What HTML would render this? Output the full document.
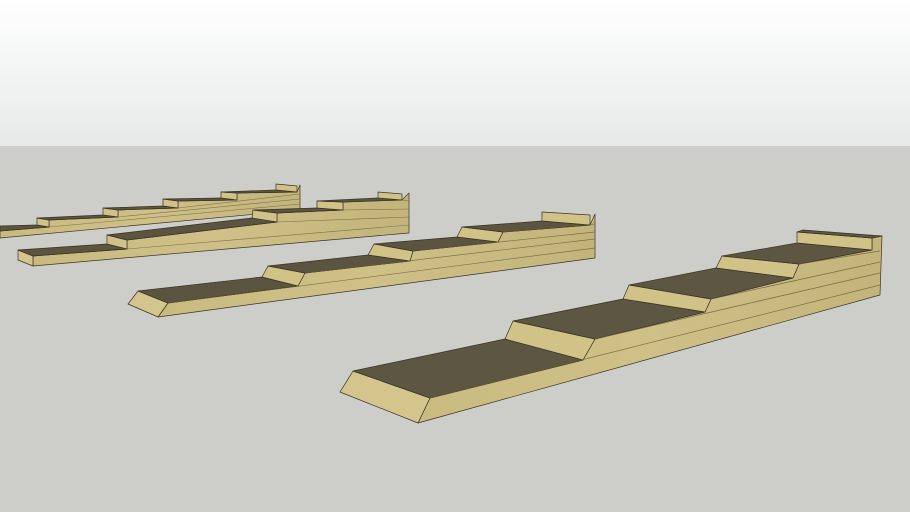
<!DOCTYPE html>
<html><head><style>html,body{margin:0;padding:0;overflow:hidden}svg{display:block}</style></head>
<body>
<svg width="910" height="512" viewBox="0 0 910 512" xmlns="http://www.w3.org/2000/svg">
<defs>
<linearGradient id="sky" x1="0" y1="0" x2="0" y2="1"><stop offset="0" stop-color="#ffffff"/><stop offset="1" stop-color="#e7e9e9"/></linearGradient>
<linearGradient id="side" x1="0" y1="0" x2="1" y2="0"><stop offset="0" stop-color="#c9bb80"/><stop offset="0.5" stop-color="#cfc088"/><stop offset="1" stop-color="#c2b47a"/></linearGradient>
</defs>
<rect x="0" y="0" width="910" height="146" fill="url(#sky)"/>
<rect x="0" y="146" width="910" height="366" fill="#cdcdca"/>
<g stroke="#3a3424" stroke-width="0.7" stroke-linejoin="round">
<polygon fill="url(#side)" points="0,231 49,227 49,220 118,217 118,210 178,208 178,201 237,200 237,193 297,192 300,185 300,210 0,238"/>
<polygon fill="#5a5440" points="0,226 37,225 49,227 0,231"/>
<polygon fill="#d1c288" points="37,218 49,220 49,227 37,225"/>
<polygon fill="#5a5440" points="37,218 103,215 118,217 49,220"/>
<polygon fill="#d1c288" points="103,208 118,210 118,217 103,215"/>
<polygon fill="#5a5440" points="103,208 163,206 178,208 118,210"/>
<polygon fill="#d1c288" points="163,199 178,201 178,208 163,206"/>
<polygon fill="#5a5440" points="163,199 221,198 237,200 178,201"/>
<polygon fill="#d1c288" points="221,192 237,193 237,200 221,198"/>
<polygon fill="#5a5440" points="221,192 276,190 297,192 237,193"/>
<polygon fill="#d1c288" points="276,184 297,186 297,192 276,190"/>
<g stroke="#6a5e3a" stroke-width="0.6" opacity="0.8"><line x1="49" y1="227" x2="300" y2="204"/><line x1="118" y1="217" x2="300" y2="199"/><line x1="178" y1="208" x2="300" y2="194"/></g>
<polygon fill="url(#side)" points="33,256 127,249 127,240 277,222 277,213 343,210 343,202 402,200 409,193 409,233 33,266"/>
<polygon fill="#d4c58c" points="18,250 33,256 33,266 18,260"/>
<polygon fill="#5a5440" points="18,250 107,244 127,249 33,256"/>
<polygon fill="#d1c288" points="107,235 127,240 127,249 107,244"/>
<polygon fill="#5a5440" points="107,235 252,218 277,222 127,240"/>
<polygon fill="#d1c288" points="253,210 277,213 277,222 252,218"/>
<polygon fill="#5a5440" points="253,210 317,208 343,210 277,213"/>
<polygon fill="#d1c288" points="317,201 343,202 343,210 317,208"/>
<polygon fill="#5a5440" points="317,201 378,198 402,200 343,202"/>
<polygon fill="#d1c288" points="378,192 402,194 402,200 378,198"/>
<g stroke="#6a5e3a" stroke-width="0.6" opacity="0.8"><line x1="127" y1="249" x2="409" y2="225"/><line x1="277" y1="222" x2="409" y2="217"/><line x1="343" y1="210" x2="409" y2="209"/><line x1="402" y1="200" x2="409" y2="201"/></g>
<polygon fill="url(#side)" points="168,303 298,286 305,273 410,261 413,251 498,242 503,232 590,225 595,214 595,258 158,317"/>
<polygon fill="#d4c58c" points="138,291 168,303 158,317 128,304"/>
<polygon fill="#5a5440" points="138,291 262,277 298,286 168,303"/>
<polygon fill="#d1c288" points="268,266 305,273 298,286 262,277"/>
<polygon fill="#5a5440" points="268,266 368,255 410,261 305,273"/>
<polygon fill="#d1c288" points="374,244 413,251 410,261 368,255"/>
<polygon fill="#5a5440" points="374,244 457,237 498,242 413,251"/>
<polygon fill="#d1c288" points="462,227 503,232 498,242 457,237"/>
<polygon fill="#5a5440" points="462,227 542,221 590,225 503,232"/>
<polygon fill="#d1c288" points="542,212 590,215 590,225 542,221"/>
<g stroke="#6a5e3a" stroke-width="0.7" opacity="0.8"><line x1="168" y1="303" x2="595" y2="248"/><line x1="305" y1="273" x2="595" y2="239"/><line x1="413" y1="251" x2="595" y2="232"/><line x1="503" y1="232" x2="595" y2="224"/></g>
<polygon fill="url(#side)" points="430,398 583,360 595,339 705,312 711,299 793,278 799,264 872,250 872,238 882,236 880,295 418,423"/>
<polygon fill="#d4c58c" points="353,371 430,398 418,423 340,392"/>
<polygon fill="#5c5642" points="353,371 505,339 583,360 430,398"/>
<polygon fill="#d1c288" points="513,321 595,339 583,360 505,339"/>
<polygon fill="#5c5642" points="513,321 623,299 705,312 595,339"/>
<polygon fill="#d1c288" points="629,285 711,299 705,312 623,299"/>
<polygon fill="#5c5642" points="629,285 716,268 793,278 711,299"/>
<polygon fill="#d1c288" points="722,256 799,264 793,278 716,268"/>
<polygon fill="#5c5642" points="722,256 797,243 872,250 799,264"/>
<polygon fill="#d1c288" points="797,232 872,238 872,250 797,243"/>
<polygon fill="#5c5642" points="797,232 803,230 882,236 872,238"/>
<g stroke="#6a5e3a" stroke-width="0.8" opacity="0.8"><line x1="430" y1="398" x2="880" y2="285"/><line x1="595" y1="339" x2="880" y2="273"/><line x1="711" y1="299" x2="880" y2="262"/><line x1="799" y1="264" x2="880" y2="251"/></g>
</g>
</svg>
</body></html>
